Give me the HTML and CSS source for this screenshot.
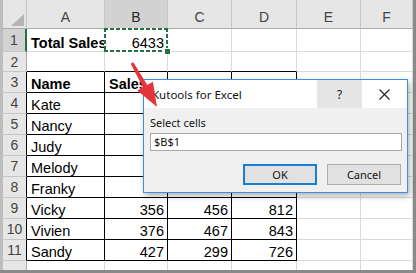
FILE: index.html
```html
<!DOCTYPE html>
<html lang="en">
<head>
    <meta charset="UTF-8">
    <title>Kutools Select Cells</title>
    <link rel="stylesheet" href="styles.css">
</head>
<body>
    <div class="frame">
        <div class="sheet">
            <div class="row head">
                <div class="corner"><span class="tri"></span></div>
                <div class="ch">A</div>
                <div class="ch sel">B</div>
                <div class="ch">C</div>
                <div class="ch">D</div>
                <div class="ch">E</div>
                <div class="ch">F</div>
            </div>
            <div class="row r1">
                <div class="rh sel">1</div>
                <div class="cell bold">Total Sales</div>
                <div class="cell num active">6433<span class="handle"></span></div>
                <div class="cell"></div>
                <div class="cell"></div>
                <div class="cell"></div>
                <div class="cell"></div>
            </div>
            <div class="row r2">
                <div class="rh">2</div>
                <div class="cell bb"></div>
                <div class="cell bb"></div>
                <div class="cell bb"></div>
                <div class="cell bb"></div>
                <div class="cell"></div>
                <div class="cell"></div>
            </div>
            <div class="row">
                <div class="rh b">3</div>
                <div class="cell b bold">Name</div>
                <div class="cell b bold">Sales</div>
                <div class="cell b"></div>
                <div class="cell b"></div>
                <div class="cell"></div>
                <div class="cell"></div>
            </div>
            <div class="row">
                <div class="rh b">4</div>
                <div class="cell b">Kate</div>
                <div class="cell b"></div>
                <div class="cell b"></div>
                <div class="cell b"></div>
                <div class="cell"></div>
                <div class="cell"></div>
            </div>
            <div class="row">
                <div class="rh b">5</div>
                <div class="cell b">Nancy</div>
                <div class="cell b"></div>
                <div class="cell b"></div>
                <div class="cell b"></div>
                <div class="cell"></div>
                <div class="cell"></div>
            </div>
            <div class="row">
                <div class="rh b">6</div>
                <div class="cell b">Judy</div>
                <div class="cell b"></div>
                <div class="cell b"></div>
                <div class="cell b"></div>
                <div class="cell"></div>
                <div class="cell"></div>
            </div>
            <div class="row">
                <div class="rh b">7</div>
                <div class="cell b">Melody</div>
                <div class="cell b"></div>
                <div class="cell b"></div>
                <div class="cell b"></div>
                <div class="cell"></div>
                <div class="cell"></div>
            </div>
            <div class="row">
                <div class="rh b">8</div>
                <div class="cell b">Franky</div>
                <div class="cell b"></div>
                <div class="cell b"></div>
                <div class="cell b"></div>
                <div class="cell"></div>
                <div class="cell"></div>
            </div>
            <div class="row">
                <div class="rh b">9</div>
                <div class="cell b">Vicky</div>
                <div class="cell b num">356</div>
                <div class="cell b num">456</div>
                <div class="cell b num">812</div>
                <div class="cell"></div>
                <div class="cell"></div>
            </div>
            <div class="row">
                <div class="rh b">10</div>
                <div class="cell b">Vivien</div>
                <div class="cell b num">376</div>
                <div class="cell b num">467</div>
                <div class="cell b num">843</div>
                <div class="cell"></div>
                <div class="cell"></div>
            </div>
            <div class="row">
                <div class="rh b">11</div>
                <div class="cell b">Sandy</div>
                <div class="cell b num">427</div>
                <div class="cell b num">299</div>
                <div class="cell b num">726</div>
                <div class="cell"></div>
                <div class="cell"></div>
            </div>
            <div class="row">
                <div class="rh"></div>
                <div class="cell"></div>
                <div class="cell"></div>
                <div class="cell"></div>
                <div class="cell"></div>
                <div class="cell"></div>
                <div class="cell"></div>
            </div>
        </div>

        <div class="dialog">
            <div class="title">
                <span class="title-text">Kutools for Excel</span>
                <span class="help">?</span>
                <span class="close">
                    <svg width="11" height="11" viewBox="0 0 11 11"><path d="M0.5 0.5L10.5 10.5M10.5 0.5L0.5 10.5" stroke="#222" stroke-width="1.1" fill="none"/></svg>
                </span>
            </div>
            <div class="dialog-body">
                <div class="label">Select cells</div>
                <div class="input">$B$1</div>
                <div class="buttons">
                    <div class="btn primary">OK</div>
                    <div class="btn">Cancel</div>
                </div>
            </div>
        </div>

        <!-- red pointer from B1 to the dialog -->
        <svg class="arrow" width="416" height="273" viewBox="0 0 416 273">
            <polygon points="130.7,63.7 133.3,62.3 147.3,84.9 152.9,81.7 157,107 137.3,90.5 142.9,87.3" fill="#e4343c"/>
        </svg>
    </div>
</body>
</html>
```

FILE: styles.css
```css
body {
    margin: 0;
    font-family: "Liberation Sans", Arial, sans-serif;
    background: #fff;
}

.frame {
    position: relative;
    width: 416px;
    height: 273px;
    background: #8a8a8a;
    overflow: hidden;
}

.sheet {
    width: 413px;
    height: 270px;
    background: #fff;
    overflow: hidden;
}

.row {
    display: grid;
    grid-template-columns: 27px 78px 63px 64px 65px 64px 52px;
    height: 21px;
}

.row.head {
    height: 29px;
}

.row.r1 {
    height: 23px;
}

.row.r2 {
    height: 20px;
}

.corner {
    position: relative;
    background: #e6e6e6;
    border-left: 3px solid #bdbdbd;
    border-right: 1px solid #c6c6c6;
    border-bottom: 1px solid #ababab;
    box-sizing: border-box;
}

.tri {
    position: absolute;
    right: 2px;
    bottom: 2px;
    width: 0;
    height: 0;
    border-left: 13px solid transparent;
    border-bottom: 12px solid #b4b4b4;
}

.ch {
    background: #e6e6e6;
    border-right: 1px solid #c6c6c6;
    border-bottom: 1px solid #ababab;
    box-sizing: border-box;
    color: #444;
    font-size: 14px;
    display: flex;
    align-items: flex-end;
    justify-content: center;
    padding-bottom: 3px;
}

.ch.sel {
    background: #d2d2d2;
    color: #262626;
}

.rh {
    background: #e6e6e6;
    border-left: 3px solid #bdbdbd;
    border-right: 1px solid #ababab;
    border-bottom: 1px solid #c6c6c6;
    box-sizing: border-box;
    color: #444;
    font-size: 14px;
    display: flex;
    align-items: center;
    justify-content: center;
}

.rh.sel {
    background: #d2d2d2;
    border-right: 2px solid #217346;
}

.rh.b {
    border-right-color: #000;
}

.cell {
    position: relative;
    border-right: 1px solid #d9d9d9;
    border-bottom: 1px solid #d9d9d9;
    box-sizing: border-box;
    padding: 0 3px 0 4px;
    font-size: 14.5px;
    line-height: 16px;
    color: #000;
    display: flex;
    align-items: flex-end;
    white-space: nowrap;
}

.cell.bold {
    font-weight: bold;
}

.cell.num {
    justify-content: flex-end;
}

.cell.b {
    border-right-color: #000;
    border-bottom-color: #000;
}

.cell.bb {
    border-bottom-color: #000;
}

/* marching ants round the copied cell */
.cell.active::after {
    content: "";
    position: absolute;
    left: -1px;
    top: -1px;
    right: -1px;
    bottom: -1px;
    background:
        repeating-linear-gradient(90deg, #217346 0 4px, #fff 4px 6px) top / 100% 2px no-repeat,
        repeating-linear-gradient(90deg, #217346 0 4px, #fff 4px 6px) bottom / 100% 2px no-repeat,
        repeating-linear-gradient(180deg, #217346 0 4px, #fff 4px 6px) left / 2px 100% no-repeat,
        repeating-linear-gradient(180deg, #217346 0 4px, #fff 4px 6px) right / 2px 100% no-repeat;
}

.handle {
    position: absolute;
    right: -4px;
    bottom: -4px;
    width: 5px;
    height: 5px;
    background: #217346;
    border: 1px solid #fff;
    z-index: 2;
}

.dialog {
    position: absolute;
    left: 143px;
    top: 79px;
    width: 265px;
    height: 114px;
    box-sizing: border-box;
    border: 1px solid #3d8fe0;
    box-shadow: 2px 3px 6px rgba(0, 0, 0, 0.3);
    display: flex;
    flex-direction: column;
    font-family: "Noto Sans", "Liberation Sans", sans-serif;
    font-size: 11px;
    color: #111;
}

.title {
    height: 28px;
    background: #fff;
    display: flex;
    align-items: stretch;
}

.title-text {
    flex: 1;
    padding-left: 8px;
    display: flex;
    align-items: center;
    font-size: 11.5px;
}

.help {
    width: 45px;
    background: #e5e5e5;
    display: flex;
    align-items: center;
    justify-content: center;
    font-size: 12px;
}

.close {
    width: 45px;
    display: flex;
    align-items: center;
    justify-content: center;
}

.dialog-body {
    flex: 1;
    background: #f0f0f0;
    padding: 8px 5px 0 6px;
}

.label {
    line-height: 14px;
}

.input {
    margin-top: 3px;
    height: 18px;
    box-sizing: border-box;
    border: 1px solid #a8a8a8;
    background: #fff;
    padding-left: 3px;
    line-height: 16px;
}

.buttons {
    display: flex;
    justify-content: flex-end;
    gap: 10px;
    margin-top: 13px;
    padding-right: 1px;
}

.btn {
    width: 74px;
    height: 21px;
    box-sizing: border-box;
    border: 1px solid #adadad;
    background: #e1e1e1;
    display: flex;
    align-items: center;
    justify-content: center;
}

.btn.primary {
    border: 2px solid #1a7fd4;
}

.arrow {
    position: absolute;
    left: 0;
    top: 0;
    pointer-events: none;
}
```
